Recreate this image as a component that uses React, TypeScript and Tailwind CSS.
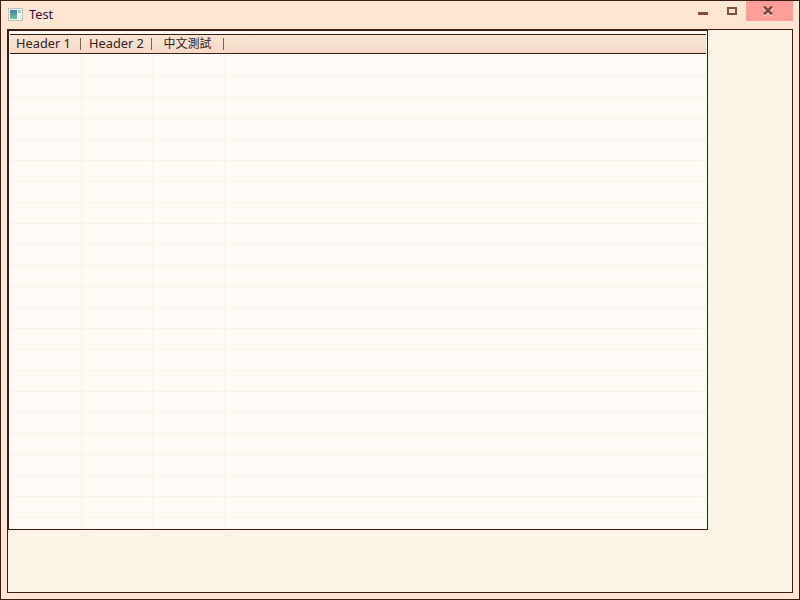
const rows = Array.from({ length: 23 }, (_, i) => i);
const cols = ['w-[72px]', 'w-[71px]', 'w-[72px]'];

function AppIcon() {
  return (
    <svg width="15" height="13" viewBox="0 0 15 13" className="block">
      <defs>
        <linearGradient id="ico" x1="0" y1="0" x2="0" y2="1">
          <stop offset="0" stopColor="#4a7f9c" />
          <stop offset="0.5" stopColor="#57a49c" />
          <stop offset="1" stopColor="#7fc096" />
        </linearGradient>
      </defs>
      <rect x="0.5" y="0.5" width="14" height="12" fill="#f3f5f2" stroke="#bcc2c0" />
      <rect x="2" y="2" width="7" height="9" fill="url(#ico)" />
      <rect x="10" y="2" width="3" height="3" fill="#a6c8cc" />
      <rect x="10" y="6" width="3" height="5" fill="#e6efee" />
    </svg>
  );
}

export default function App() {
  return (
    <div className="w-[800px] h-[600px] flex flex-col bg-[#ffe6d2] border border-[#3f1c14] overflow-hidden font-['Noto_Sans','Noto_Sans_CJK_TC',sans-serif] text-[12.8px]">
      {/* title bar */}
      <div className="h-[28px] shrink-0 flex items-start">
        <div className="ml-[7px] mt-[7px]"><AppIcon /></div>
        <span className="ml-[6px] mt-[4px] leading-[18px] text-[#3a0f3c]">Test</span>
        <div className="ml-auto flex items-start">
          <div className="w-[10px] h-[3px] mt-[11px] bg-[#84503c]" />
          <div className="w-[10px] h-[8px] mt-[6px] ml-[19px] border-2 border-[#84503c]" />
          <div className="w-[47px] h-[20px] ml-[9px] mr-[6px] bg-[#ff9e98] flex items-center pl-[17px]">
            <svg width="10" height="10" viewBox="0 0 10 10">
              <path d="M1 1.5 L9 9.5 M9 1.5 L1 9.5" stroke="#ffffff" strokeWidth="2.5" fill="none" />
              <path d="M1 0.5 L9 8.5 M9 0.5 L1 8.5" stroke="#7c4a3c" strokeWidth="2.5" fill="none" />
            </svg>
          </div>
        </div>
      </div>

      {/* client area */}
      <div className="w-[786px] h-[564px] ml-[6px] bg-[#fbf3e4] border border-[#3f1c14]">
        <div className="w-[700px] h-[500px] flex flex-col bg-[#fffaf5] border border-[#3f1c14] pl-px pr-px pt-[3px] overflow-hidden">
          <div className="h-[20px] shrink-0 flex border-t border-b border-[#3f1c14] bg-gradient-to-b from-[#f7e4d4] to-[#f3dac6] text-[#33201c]">
            <div className="w-[70px] flex items-center pl-[6px]">Header 1</div>
            <div className="w-px h-[12px] self-center bg-[#8a5a4a]" />
            <div className="w-[70px] flex items-center pl-[8px]">Header 2</div>
            <div className="w-px h-[12px] self-center bg-[#8a5a4a]" />
            <div className="w-[71px] flex items-center justify-center text-[12px]">中文測試</div>
            <div className="w-px h-[12px] self-center bg-[#8a5a4a]" />
          </div>
          <div className="flex-1 mt-px overflow-hidden">
            {rows.map((r) => (
              <div key={r} className={`flex border-b border-[#fbf3e4] ${r === 0 ? 'h-[22px]' : 'h-[21px]'}`}>
                {cols.map((c) => (
                  <div key={c + r} className={`${c} border-r border-[#fbf3e4]`} />
                ))}
              </div>
            ))}
          </div>
        </div>
      </div>
    </div>
  );
}
